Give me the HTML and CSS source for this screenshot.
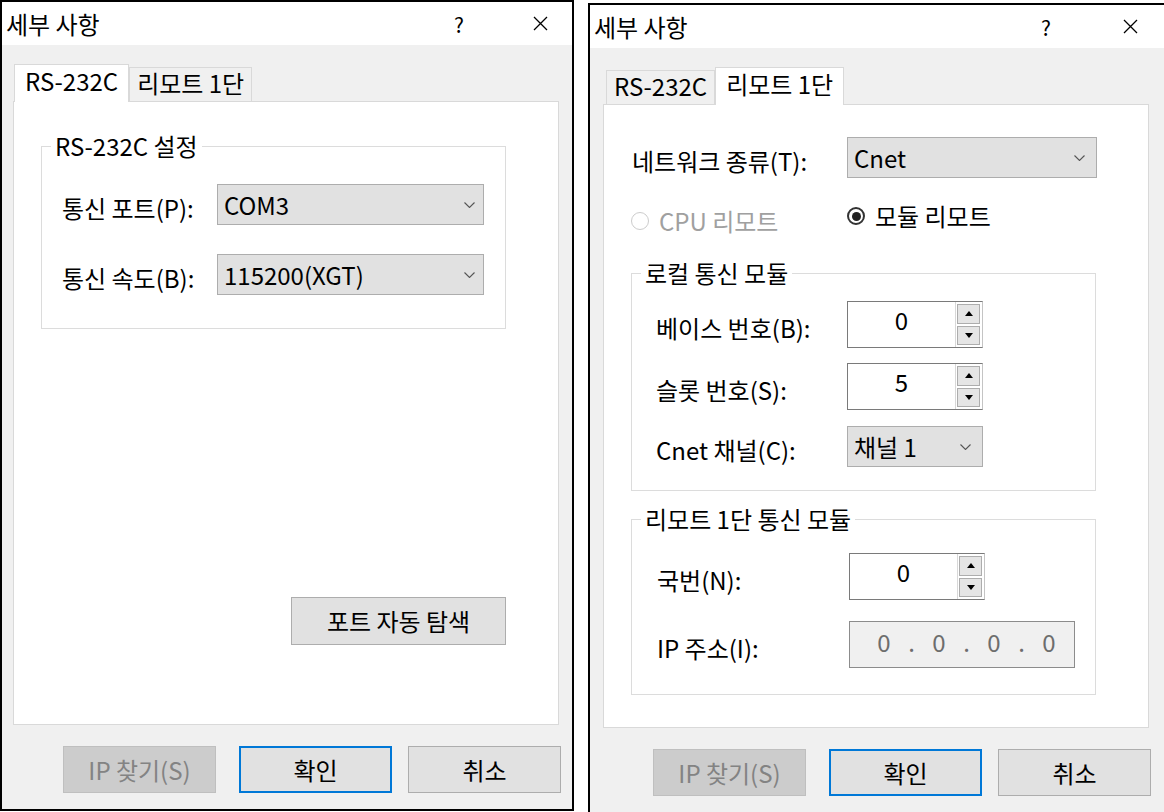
FILE: index.html
```html
<!DOCTYPE html>
<html>
<head>
  <meta charset="utf-8">
  <meta name="viewport" content="width=device-width, initial-scale=1">
  <title>세부 사항</title>
  <link rel="stylesheet" href="styles.css">
</head>
<body>
<div class="screen">

  <!-- first dialog: RS-232C tab -->
  <div class="dialog">
    <div class="titlebar">
      <span class="title">세부 사항</span>
      <span class="cap-btn cap-help">?</span>
      <span class="cap-btn cap-close">
        <svg width="15" height="15" viewBox="0 0 15 15"><path d="M1 1L14 14M14 1L1 14" stroke="#000" stroke-width="1.3" fill="none"/></svg>
      </span>
    </div>
    <div class="dialog-body">
      <div class="tabs">
        <div class="tab active">RS-232C</div>
        <div class="tab">리모트 1단</div>
      </div>
      <div class="panel">
        <div class="serial-page">
          <fieldset class="group">
            <legend>RS-232C 설정</legend>
            <div class="row">
              <span class="label label-serial">통신 포트(P):</span>
              <div class="combo combo-port">
                <span>COM3</span>
                <svg class="chev" width="11" height="6" viewBox="0 0 11 6"><path d="M0.5 0.5L5.5 5.5L10.5 0.5" stroke="#555" stroke-width="1.1" fill="none"/></svg>
              </div>
            </div>
            <div class="row row-gap-lg">
              <span class="label label-serial">통신 속도(B):</span>
              <div class="combo combo-port">
                <span>115200(XGT)</span>
                <svg class="chev" width="11" height="6" viewBox="0 0 11 6"><path d="M0.5 0.5L5.5 5.5L10.5 0.5" stroke="#555" stroke-width="1.1" fill="none"/></svg>
              </div>
            </div>
          </fieldset>
          <button class="btn btn-scan">포트 자동 탐색</button>
        </div>
      </div>
      <div class="actions">
        <button class="btn btn-disabled">IP 찾기(S)</button>
        <button class="btn btn-default">확인</button>
        <button class="btn">취소</button>
      </div>
    </div>
  </div>

  <!-- second dialog: remote tab -->
  <div class="dialog dialog-second">
    <div class="titlebar">
      <span class="title">세부 사항</span>
      <span class="cap-btn cap-help">?</span>
      <span class="cap-btn cap-close">
        <svg width="15" height="15" viewBox="0 0 15 15"><path d="M1 1L14 14M14 1L1 14" stroke="#000" stroke-width="1.3" fill="none"/></svg>
      </span>
    </div>
    <div class="dialog-body">
      <div class="tabs">
        <div class="tab">RS-232C</div>
        <div class="tab active">리모트 1단</div>
      </div>
      <div class="panel">
        <div class="remote-page">
          <div class="row net-row">
            <span class="label label-net">네트워크 종류(T):</span>
            <div class="combo combo-net">
              <span>Cnet</span>
              <svg class="chev" width="11" height="6" viewBox="0 0 11 6"><path d="M0.5 0.5L5.5 5.5L10.5 0.5" stroke="#555" stroke-width="1.1" fill="none"/></svg>
            </div>
          </div>

          <div class="radio-row">
            <div class="radio radio-cpu disabled">
              <span class="radio-circle"></span>
              <span>CPU 리모트</span>
            </div>
            <div class="radio">
              <span class="radio-circle checked"></span>
              <span>모듈 리모트</span>
            </div>
          </div>

          <fieldset class="group group-local">
            <legend>로컬 통신 모듈</legend>
            <div class="row">
              <span class="label label-local">베이스 번호(B):</span>
              <div class="spin">
                <span class="spin-value">0</span>
                <span class="spin-btns">
                  <span class="spin-btn"><i class="tri-up"></i></span>
                  <span class="spin-btn"><i class="tri-down"></i></span>
                </span>
              </div>
            </div>
            <div class="row row-gap-sm">
              <span class="label label-local">슬롯 번호(S):</span>
              <div class="spin">
                <span class="spin-value">5</span>
                <span class="spin-btns">
                  <span class="spin-btn"><i class="tri-up"></i></span>
                  <span class="spin-btn"><i class="tri-down"></i></span>
                </span>
              </div>
            </div>
            <div class="row row-gap-sm">
              <span class="label label-local">Cnet 채널(C):</span>
              <div class="combo combo-channel">
                <span>채널 1</span>
                <svg class="chev" width="11" height="6" viewBox="0 0 11 6"><path d="M0.5 0.5L5.5 5.5L10.5 0.5" stroke="#555" stroke-width="1.1" fill="none"/></svg>
              </div>
            </div>
          </fieldset>

          <fieldset class="group group-remote">
            <legend>리모트 1단 통신 모듈</legend>
            <div class="row">
              <span class="label label-remote">국번(N):</span>
              <div class="spin">
                <span class="spin-value">0</span>
                <span class="spin-btns">
                  <span class="spin-btn"><i class="tri-up"></i></span>
                  <span class="spin-btn"><i class="tri-down"></i></span>
                </span>
              </div>
            </div>
            <div class="row row-gap-md">
              <span class="label label-remote">IP 주소(I):</span>
              <div class="ip-box">
                <span class="ip-part">0</span><span class="ip-dot">.</span>
                <span class="ip-part">0</span><span class="ip-dot">.</span>
                <span class="ip-part">0</span><span class="ip-dot">.</span>
                <span class="ip-part">0</span>
              </div>
            </div>
          </fieldset>
        </div>
      </div>
      <div class="actions">
        <button class="btn btn-disabled">IP 찾기(S)</button>
        <button class="btn btn-default">확인</button>
        <button class="btn">취소</button>
      </div>
    </div>
  </div>

</div>
</body>
</html>
```

FILE: styles.css
```css
* {
  box-sizing: border-box;
}

body {
  margin: 0;
  background: #fff;
  color: #000;
  font-family: "Noto Sans CJK KR", "Noto Sans", sans-serif;
  font-size: 24px;
}

.screen {
  display: flex;
  align-items: flex-start;
  width: 1164px;
  height: 812px;
  overflow: hidden;
}

/* window frame */
.dialog {
  flex: none;
  width: 574px;
  height: 811px;
  border: 2px solid #000;
  background: #f0f0f0;
  display: flex;
  flex-direction: column;
}

.dialog-second {
  width: 580px;
  height: 820px;
  margin-left: 14px;
  margin-top: 3px;
}

.titlebar {
  height: 43px;
  flex: none;
  background: #fff;
  display: flex;
  align-items: center;
}

.title {
  flex: 1;
  padding-left: 4px;
  line-height: 26px;
}

.cap-btn {
  display: flex;
  justify-content: center;
  align-items: center;
  height: 43px;
}

.cap-help {
  width: 98px;
  font-size: 21px;
}

.cap-close {
  width: 64px;
}

.dialog-second .cap-close {
  width: 72px;
}

.dialog-second .cap-help {
  width: 96px;
}

.dialog-body {
  flex: 1;
  display: flex;
  flex-direction: column;
  padding: 19px 0 0 11px;
}

.dialog-second .dialog-body {
  padding-left: 13px;
}

/* tabs */
.tabs {
  display: flex;
  align-items: flex-end;
  height: 37px;
  padding-left: 1px;
}

.dialog-second .tabs {
  padding-left: 3px;
}

.tab {
  height: 34px;
  padding: 0 7px 3px;
  display: flex;
  align-items: center;
  background: #f0f0f0;
  border: 1px solid #d9d9d9;
  border-bottom: none;
  line-height: 26px;
}

.tab.active {
  height: 38px;
  margin-bottom: -1px;
  padding: 0 10px 5px;
  background: #fff;
  position: relative;
  z-index: 1;
}

.panel {
  width: 546px;
  height: 624px;
  background: #fff;
  border: 1px solid #d9d9d9;
}

/* group boxes */
.group {
  margin: 0;
  padding: 0;
  min-width: 0;
  width: 465px;
  border: 1px solid #dcdcdc;
}

.group legend {
  margin-left: 9px;
  padding: 0 4px;
  height: 26px;
  line-height: 26px;
}

.row {
  display: flex;
  align-items: center;
  line-height: 26px;
}

.row-gap-lg {
  margin-top: 29px;
}

.row-gap-md {
  margin-top: 21px;
}

.row-gap-sm {
  margin-top: 15px;
}

.group-local .row-gap-sm + .row-gap-sm {
  margin-top: 16px;
}

.label {
  flex: none;
  padding-top: 6px;
}

.label-serial {
  width: 175px;
  padding-left: 20px;
}

.label-net {
  width: 243px;
  padding-left: 28px;
}

.label-local {
  width: 215px;
  padding-left: 24px;
}

.label-remote {
  width: 217px;
  padding-left: 25px;
}

/* combo boxes */
.combo {
  height: 41px;
  display: flex;
  align-items: center;
  padding: 0 8px 0 6px;
  background: #e1e1e1;
  border: 1px solid #adadad;
}

.combo .chev {
  margin-left: auto;
}

.combo-port {
  width: 267px;
}

.combo-net {
  width: 250px;
  padding-right: 11px;
}

.combo-channel {
  width: 136px;
  padding-right: 11px;
}

/* RS-232C page */
.serial-page {
  display: flex;
  flex-direction: column;
  width: 465px;
  margin: 31px 0 0 27px;
}

.serial-page .group {
  padding: 25px 0 33px;
}

.btn {
  font: inherit;
  color: #000;
  width: 153px;
  height: 47px;
  padding: 0;
  background: #e1e1e1;
  border: 1px solid #adadad;
  line-height: 26px;
}

.btn-scan {
  align-self: flex-end;
  width: 215px;
  height: 48px;
  margin-top: 268px;
}

.btn-default {
  border: 2px solid #0078d7;
  margin: 0 16px 0 23px;
}

.btn-disabled {
  background: #cccccc;
  border-color: #bfbfbf;
  color: #838383;
}

.actions {
  display: flex;
  justify-content: flex-end;
  width: 548px;
  margin-top: 21px;
}

/* remote page */
.remote-page {
  padding: 32px 0 0 0;
}

.radio-row {
  display: flex;
  align-items: flex-start;
  margin-top: 24px;
  padding-left: 27px;
  line-height: 28px;
}

.radio {
  display: flex;
  align-items: center;
  gap: 10px;
}

.radio-cpu {
  width: 216px;
  margin-top: 5px;
}

.radio.disabled {
  color: #a0a0a0;
}

.radio-circle {
  width: 18px;
  height: 18px;
  border-radius: 50%;
  border: 1px solid #333;
  background: #fff;
  display: flex;
  justify-content: center;
  align-items: center;
}

.radio.disabled .radio-circle {
  border-color: #cccccc;
}

.radio-circle.checked {
  border-width: 2px;
}

.radio-circle.checked::after {
  content: "";
  width: 9px;
  height: 9px;
  border-radius: 50%;
  background: #222;
}

.remote-page .group {
  margin-left: 27px;
}

.group-local {
  margin-top: 25px;
  padding: 15px 0 23px;
}

.group-remote {
  margin-top: 15px;
  padding: 21px 0 26px;
}

/* spin boxes */
.spin {
  display: flex;
  width: 136px;
  height: 47px;
  background: #fff;
  border: 1px solid #7a7a7a;
  border-right-color: #c4c4c4;
}

.spin-value {
  flex: 1;
  text-align: center;
  line-height: 36px;
}

.spin-btns {
  width: 27px;
  display: flex;
  flex-direction: column;
  gap: 2px;
  padding: 2px 2px 2px 1px;
  border-left: 1px solid #d8d8d8;
}

.spin-btn {
  flex: 1;
  display: flex;
  justify-content: center;
  align-items: center;
  background: #e5e5e5;
  border: 1px solid #adadad;
}

.tri-up,
.tri-down {
  width: 0;
  height: 0;
  border-left: 4px solid transparent;
  border-right: 4px solid transparent;
}

.tri-up {
  border-bottom: 5px solid #000;
}

.tri-down {
  border-top: 5px solid #000;
}

/* ip address field */
.ip-box {
  display: flex;
  align-items: center;
  width: 226px;
  height: 47px;
  padding: 0 0 5px 15px;
  background: #f0f0f0;
  border: 1px solid #8c8c8c;
  color: #6d6d6d;
}

.ip-part {
  width: 38px;
  text-align: center;
}

.ip-dot {
  width: 17px;
  text-align: center;
}
```
